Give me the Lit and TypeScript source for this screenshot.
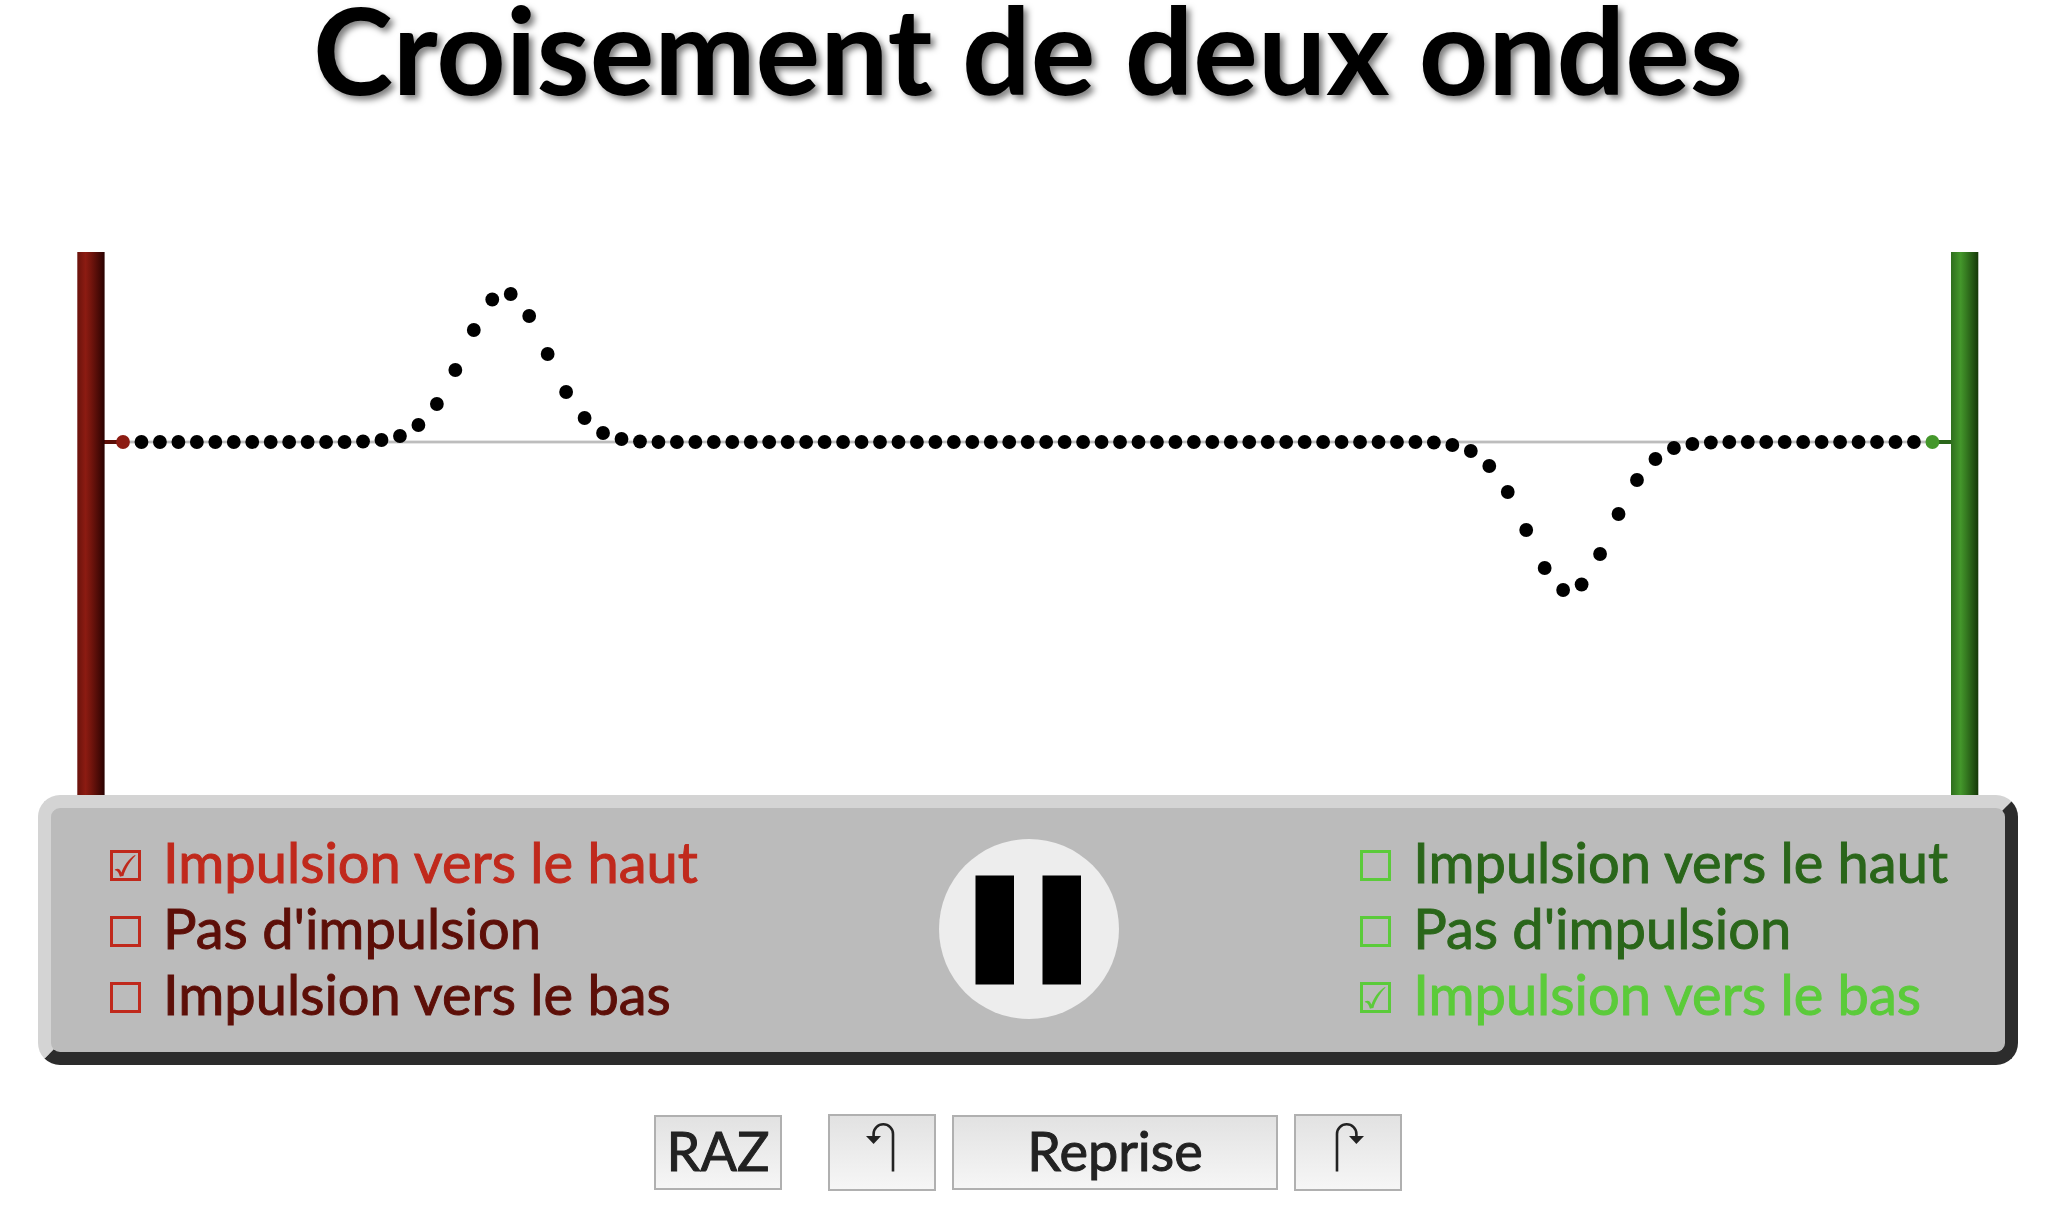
import { LitElement, html, svg, css, nothing } from "lit";
import { customElement, property, state } from "lit/decorators.js";
import { classMap } from "lit/directives/class-map.js";

const CHOICES = ["Impulsion vers le haut", "Pas d'impulsion", "Impulsion vers le bas"];

const BEAD_COUNT = 99;
const FIRST_X = 85;
const LAST_X = 1894.4;
const REST_Y = 190;
const RISE = [0.5, 2, 6, 17, 38, 72, 112, 142.5, 148, 126, 88, 50, 24, 9, 3, 0.5];
const LEFT_START = 13;
const RIGHT_START = 71;

function displacement(i: number): number {
  const up = RISE[i - LEFT_START] ?? 0;
  const down = [...RISE].reverse()[i - RIGHT_START] ?? 0;
  return down - up;
}

@customElement("wave-string")
export class WaveString extends LitElement {
  static styles = css`
    :host {
      display: block;
    }
    .scene {
      display: block;
      width: 100%;
      height: auto;
    }
  `;

  render() {
    const step = (LAST_X - FIRST_X) / (BEAD_COUNT - 1);
    const beads = Array.from({ length: BEAD_COUNT }, (_, i) => {
      const fill = i === 0 ? "#8c1b12" : i === BEAD_COUNT - 1 ? "#44972b" : "#000";
      return svg`<circle cx=${FIRST_X + i * step} cy=${REST_Y + displacement(i)} r="6.9" fill=${fill}></circle>`;
    });
    return html`
      <svg class="scene" viewBox="0 0 1980 543" role="img" aria-label="Corde">
        <defs>
          <linearGradient id="red">
            <stop offset="0" stop-color="#6a130c"></stop>
            <stop offset="0.3" stop-color="#8c1b12"></stop>
            <stop offset="0.5" stop-color="#74150d"></stop>
            <stop offset="1" stop-color="#2a0201"></stop>
          </linearGradient>
          <linearGradient id="green">
            <stop offset="0" stop-color="#2f6e1d"></stop>
            <stop offset="0.35" stop-color="#44972b"></stop>
            <stop offset="0.55" stop-color="#367c21"></stop>
            <stop offset="1" stop-color="#153808"></stop>
          </linearGradient>
        </defs>
        <rect x="66" y="188.6" width="1848" height="2.8" fill="#bdbdbd"></rect>
        <rect x="66" y="188" width="19" height="4" fill="#5d0f08"></rect>
        <rect x="1894" y="188" width="20" height="4" fill="#2a661a"></rect>
        <rect x="39.3" y="0" width="27.3" height="543" fill="url(#red)"></rect>
        <rect x="1913" y="0" width="27.3" height="543" fill="url(#green)"></rect>
        ${beads}
      </svg>
    `;
  }
}

@customElement("pulse-choice")
export class PulseChoice extends LitElement {
  static styles = css`
    :host {
      display: block;
    }
    .list {
      margin: 0;
      padding: 0 0 2px;
      border: 0;
      display: flex;
      flex-direction: column;
    }
    .row {
      display: flex;
      align-items: center;
      gap: 22px;
      font-size: 56px;
      line-height: 66px;
      white-space: nowrap;
      cursor: pointer;
    }
    .tick {
      display: grid;
      width: 31px;
      height: 31px;
      padding-top: 6px;
    }
    .box {
      grid-area: 1 / 1;
      appearance: none;
      box-sizing: border-box;
      width: 31px;
      height: 31px;
      margin: 0;
      border: 3px solid currentColor;
      color: inherit;
    }
    .mark {
      grid-area: 1 / 1;
      width: 31px;
      height: 31px;
      pointer-events: none;
    }
    .red {
      color: #5d0f08;
    }
    .red .tick,
    .red.on {
      color: #c0291c;
    }
    .green {
      color: #2a661a;
    }
    .green .tick,
    .green.on {
      color: #5bcb3a;
    }
  `;

  @property() side: "red" | "green" = "red";
  @property({ type: Number }) selected = 0;

  render() {
    return html`
      <fieldset class="list" aria-label="Impulsion">
        ${CHOICES.map((text, i) => {
          const on = i === this.selected;
          return html`
            <label class=${classMap({ row: true, on, [this.side]: true })}>
              <span class="tick">
                <input class="box" type="radio" name="pulse" .checked=${on} @change=${() => (this.selected = i)} />
                ${on
                  ? html`<svg class="mark" viewBox="0 0 31 31" aria-hidden="true">
                      <path
                        d="M4.8 19.6 C6.4 18.4 8.6 18.6 9.6 19.4 C10.4 20.2 11 21.6 11.4 22.6 C13.6 16.4 18.6 8.6 25 5 L25.6 5.6 C20.4 10.6 15.6 18.4 13.4 26 C12.2 26.2 11 26.4 10 26.8 C9 23.6 8 20.6 5 20.2 Z"
                        fill="currentColor"
                      ></path>
                    </svg>`
                  : nothing}
              </span>
              <span>${text}</span>
            </label>
          `;
        })}
      </fieldset>
    `;
  }
}

@customElement("app-root")
export class AppRoot extends LitElement {
  static styles = css`
    :host {
      display: block;
      background: #fff;
      font-family: Lato, "Liberation Sans", sans-serif;
      font-weight: 400;
      -webkit-text-stroke: 1px currentColor;
    }
    .page {
      display: flex;
      flex-direction: column;
      padding: 0 30px 24px 38px;
    }
    .title {
      margin: 0;
      padding-bottom: 154px;
      font-size: 121px;
      line-height: 98px;
      font-weight: 700;
      -webkit-text-stroke: 0;
      text-align: center;
      color: #000;
      text-shadow: 4px 4px 6px rgba(0, 0, 0, 0.5);
    }
    .panel {
      display: grid;
      grid-template-columns: 1fr auto 1fr;
      align-items: center;
      padding: 21px 57px 23px 59px;
      border: 13px solid;
      border-color: #d4d4d4 #2c2c2c #2c2c2c #d4d4d4;
      border-radius: 22px;
      background: #bbb;
    }
    .right {
      justify-self: end;
    }
    .pause {
      display: block;
      width: 180px;
      height: 180px;
      padding: 0;
      margin: 10px 0;
      border: 0;
      border-radius: 50%;
      background: #ededed;
    }
    .icon {
      display: block;
      width: 100%;
      height: 100%;
    }
    .bar {
      display: flex;
      justify-content: center;
      align-items: center;
      gap: 16px;
      padding-top: 49px;
    }
    .btn {
      box-sizing: border-box;
      height: 75px;
      padding: 0 8px 4px;
      border: 2px solid #b0b0b0;
      background: linear-gradient(#e2e2e2, #f6f6f6);
      color: #222;
      font: inherit;
      font-size: 54px;
      line-height: 66px;
    }
    .reset {
      min-width: 128px;
      margin-right: 30px;
    }
    .step {
      width: 108px;
      height: 77px;
      padding: 0;
    }
    .resume {
      min-width: 326px;
    }
  `;

  @state() private paused = false;

  private arrow(mirrored: boolean) {
    return html`<svg class="icon" viewBox="0 0 104 73" aria-hidden="true">
      <g transform=${mirrored ? "translate(104 0) scale(-1 1)" : ""}>
        <path d="M63 55.5 V18 A9.7 9.7 0 0 0 43.6 18 V22" fill="none" stroke="#222" stroke-width="2.6"></path>
        <path d="M36 20 H51 L43.6 28 Z" fill="#222"></path>
      </g>
    </svg>`;
  }

  render() {
    return html`
      <main class="page">
        <h1 class="title">Croisement de deux ondes</h1>
        <wave-string></wave-string>
        <section class="panel">
          <pulse-choice side="red" .selected=${0}></pulse-choice>
          <button class="pause" aria-label="Pause" @click=${() => (this.paused = !this.paused)}>
            <svg class="icon" viewBox="0 0 180 180" aria-hidden="true">
              <rect x="36.5" y="36.5" width="38.5" height="109" fill="#000"></rect>
              <rect x="103.5" y="36.5" width="38.5" height="109" fill="#000"></rect>
            </svg>
          </button>
          <pulse-choice class="right" side="green" .selected=${2}></pulse-choice>
        </section>
        <nav class="bar">
          <button class="btn reset">RAZ</button>
          <button class="btn step" aria-label="Reculer">${this.arrow(false)}</button>
          <button class="btn resume">Reprise</button>
          <button class="btn step" aria-label="Avancer">${this.arrow(true)}</button>
        </nav>
      </main>
    `;
  }
}
